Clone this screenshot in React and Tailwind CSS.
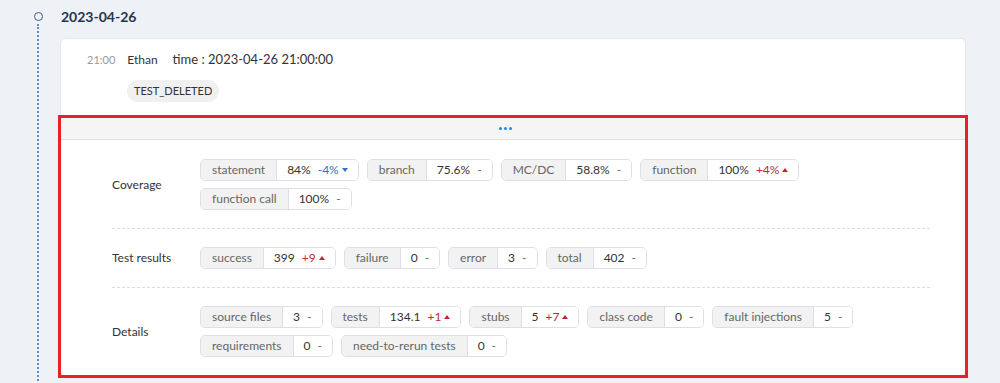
import React from 'react';

const coverage = [
  { label: 'statement', value: '84%', delta: '-4%', dir: 'down' },
  { label: 'branch', value: '75.6%' },
  { label: 'MC/DC', value: '58.8%' },
  { label: 'function', value: '100%', delta: '+4%', dir: 'up' },
  { label: 'function call', value: '100%' },
];

const results = [
  { label: 'success', value: '399', delta: '+9', dir: 'up' },
  { label: 'failure', value: '0' },
  { label: 'error', value: '3' },
  { label: 'total', value: '402' },
];

const details = [
  { label: 'source files', value: '3' },
  { label: 'tests', value: '134.1', delta: '+1', dir: 'up' },
  { label: 'stubs', value: '5', delta: '+7', dir: 'up' },
  { label: 'class code', value: '0' },
  { label: 'fault injections', value: '5' },
  { label: 'requirements', value: '0' },
  { label: 'need-to-rerun tests', value: '0' },
];

function Caret({ dir }) {
  return (
    <svg width="6" height="4" viewBox="0 0 6 4" className="ml-[3px]">
      {dir === 'up' ? <path d="M3 0 L6 4 L0 4 Z" fill="currentColor" /> : <path d="M0 0 L6 0 L3 4 Z" fill="currentColor" />}
    </svg>
  );
}

function Chip({ label, value, delta, dir }) {
  return (
    <div className="flex h-[22px] overflow-hidden rounded-[5px] border border-[#dcdfe6] text-[12px] leading-[20px]">
      <div className="bg-[#f2f2f2] px-[11px] text-[#666] border-r border-[#dcdfe6]">{label}</div>
      <div className="flex items-center gap-[7px] bg-white px-[10px] text-[#333]">
        <span>{value}</span>
        {delta ? (
          <span className={`flex items-center ${dir === 'up' ? 'text-[#c4262e]' : 'text-[#2f6fd6]'}`}>
            {delta}
            <Caret dir={dir} />
          </span>
        ) : (
          <span className="text-[#666]">-</span>
        )}
      </div>
    </div>
  );
}

function Group({ title, items, first, last }) {
  return (
    <div className={`flex items-center ${first ? 'pt-[19px]' : 'pt-[18px]'} pb-[18px] ${last ? '' : 'border-b border-dashed border-[#dcdcdc]'}`}>
      <div className="w-[88px] shrink-0 text-[12px] text-[#333]">{title}</div>
      <div className="flex flex-1 flex-wrap gap-x-2 gap-y-[7px]">
        {items.map((it) => (
          <Chip key={it.label} {...it} />
        ))}
      </div>
    </div>
  );
}

export default function App() {
  return (
    <div className="flex h-[383px] overflow-hidden bg-[#eef1f6] pr-[34px] font-['Lato','Liberation_Sans',sans-serif]">
      {/* timeline rail */}
      <div className="w-[60px] shrink-0 pl-[33px]">
        <div className="flex w-[10px] flex-col items-center">
          <div className="mt-[12px] h-[9px] w-[9px] rounded-full border-[1.5px] border-[#3d5a80]" />
          <div className="mt-[3px] h-[400px] border-l-2 border-dotted border-[#5b8fc4]" />
        </div>
      </div>

      <div className="flex-1">
        <div className="h-[38px] pt-[7px] pl-px text-[14px] font-bold leading-5 text-[#1f3552]">2023-04-26</div>

        <div className="rounded-[5px] border border-[#e4e7ed] bg-white">
          <div className="pt-[11px] pb-4 pl-[26px]">
            <div className="flex h-5 items-center">
              <span className="text-[11px] text-[#999]">21:00</span>
              <span className="ml-3 text-[12px] text-[#333]">Ethan</span>
              <span className="ml-[15px] text-[13px] text-[#333]">time : 2023-04-26 21:00:00</span>
            </div>
            <div className="mt-[10px] flex pl-10">
              <span className="h-[22px] rounded-full bg-[#f0f0f0] px-[7px] text-[11px] leading-[22px] text-[#333]">TEST_DELETED</span>
            </div>
          </div>

          <div className="outline-[3px] outline-solid outline-[#e8202a]">
            <div className="flex h-[22px] items-center justify-center gap-[2px] border-b border-[#e0e0e0] bg-[#f5f5f5] pr-4">
              <span className="h-[3px] w-[3px] rounded-full bg-[#1e88e5]" />
              <span className="h-[3px] w-[3px] rounded-full bg-[#1e88e5]" />
              <span className="h-[3px] w-[3px] rounded-full bg-[#1e88e5]" />
            </div>
            <div className="pl-[51px] pr-[35px]">
              <Group title="Coverage" items={coverage} first />
              <Group title="Test results" items={results} />
              <Group title="Details" items={details} last />
            </div>
          </div>
        </div>
      </div>
    </div>
  );
}
